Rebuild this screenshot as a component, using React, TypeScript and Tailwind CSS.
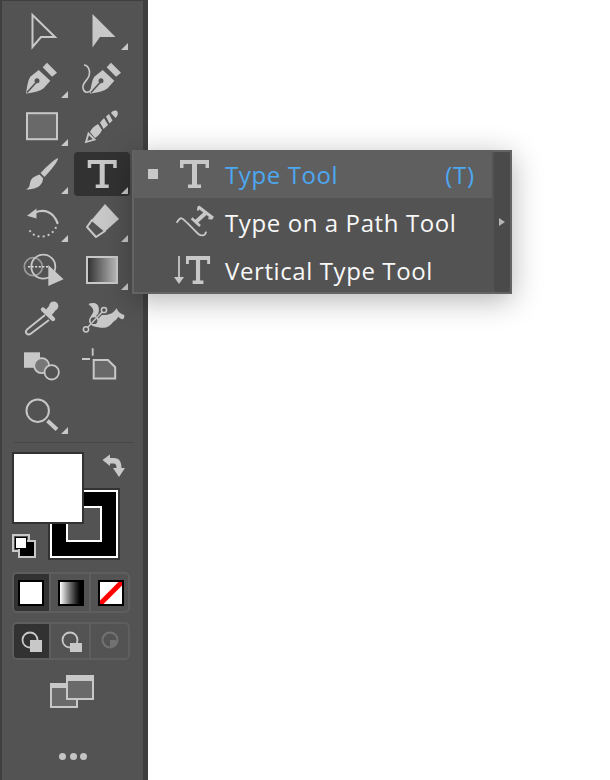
import type { ReactNode } from 'react';

const ink = '#c8c8c8';
const panel = '#535353';

// serif T used by the tool button and the flyout
function TGlyph({ x = 0, y = 0, fill = ink }: { x?: number; y?: number; fill?: string }) {
  return (
    <path
      transform={`translate(${x} ${y})`}
      fill={fill}
      d="M0 0H29V8H25.5V4H17V24.5H21V28H8V24.5H12V4H3.5V8H0Z"
    />
  );
}

function PenNib({ dx = 0 }: { dx?: number }) {
  return (
    <g transform={`translate(${dx} 0)`}>
      <path fill={ink} d="M33 6.7L43 16.7L38 20.7L28.7 11.3Z" />
      <path fill={ink} d="M12 37.5C13 31 14 24 16.3 20.7L24.7 14L36.3 24.7L29.7 32.3C26 35 19 37 12 37.5Z" />
      <path stroke={panel} strokeWidth="1.6" d="M13 36.5L22.5 26" />
      <circle cx="23" cy="24.7" r="2.5" fill={panel} />
    </g>
  );
}

const tools: { icon: ReactNode; corner?: boolean; active?: boolean }[] = [
  {
    icon: <path d="M18.5 7L41 29H27L18.5 39Z" fill="none" stroke={ink} strokeWidth="2" />,
  },
  {
    icon: <path d="M18.5 6L41.5 29H26L18.5 39.5Z" fill={ink} />,
    corner: true,
  },
  { icon: <PenNib />, corner: true },
  {
    icon: (
      <>
        <PenNib dx={4} />
        <path
          d="M10 9C14 9 17 15 15 20C13 25 8 27 9 32C10 37 15 38 17.5 33"
          fill="none"
          stroke={ink}
          strokeWidth="1.6"
        />
      </>
    ),
  },
  {
    icon: <rect x="13" y="9.2" width="30" height="26" fill="#696969" stroke={ink} strokeWidth="2" />,
    corner: true,
  },
  {
    icon: (
      <>
        <path d="M12 38L14.5 29.5L20.5 35.5Z" fill="none" stroke={ink} strokeWidth="1.8" />
        <path d="M16 28C18 24 20 22.5 24 20L28 26C26 30 24 32 21 34Z" fill={ink} />
        <path d="M26 18.5L30 14L34 21L29.5 25Z" fill={ink} />
        <path d="M32 12.5L35 10L38.5 16.5L35.5 19.5Z" fill={ink} />
        <path d="M37 9C39 6.5 41 6 43 7C44.5 9 44 11.5 41.5 14Z" fill={ink} />
      </>
    ),
  },
  {
    icon: (
      <>
        <path d="M44 6C44.5 9 37 18 30.5 25L26.5 21C33 14 41 7 44 6Z" fill={ink} />
        <path d="M25.5 22.5L29 26C29 31 26 37.5 12 37.5C17 35 15 32 17 28C18.5 25 22 24 25.5 22.5Z" fill={ink} />
      </>
    ),
    corner: true,
  },
  {
    icon: <TGlyph x={13.7} y={8} />,
    corner: true,
    active: true,
  },
  {
    icon: (
      <>
        <path d="M13 15.7L22.5 8.5V18.5Z" fill={ink} />
        <path d="M21 12.5C30 9 39 11 43.5 23" fill="none" stroke={ink} strokeWidth="2.2" />
        <path
          d="M43.5 23C41.5 31 36 36 28.5 36.5C22 37 17 34 15 29"
          fill="none"
          stroke={ink}
          strokeWidth="2.2"
          strokeDasharray="0.1 5"
          strokeLinecap="round"
        />
      </>
    ),
    corner: true,
  },
  {
    icon: (
      <>
        <path d="M31 4L45 19L31.5 31L18 19.5Z" fill={ink} />
        <path d="M18 20L31 31L22 37L13 27Z" fill="none" stroke={ink} strokeWidth="2" strokeLinejoin="round" />
      </>
    ),
    corner: true,
  },
  {
    icon: (
      <>
        <circle cx="19.3" cy="18.7" r="9" fill="none" stroke="#9a9a9a" strokeWidth="1.7" />
        <circle cx="29.3" cy="18.7" r="12" fill="none" stroke={ink} strokeWidth="1.8" />
        <path d="M14 18.7H34" stroke="#e2e2e2" strokeWidth="1.6" strokeDasharray="2 1.6" />
        <path d="M34.3 17L49.5 31.3L34.3 38Z" fill={ink} />
      </>
    ),
  },
  {
    icon: (
      <>
        <defs>
          <linearGradient id="gradTool">
            <stop offset="0" stopColor="#2f2f2f" />
            <stop offset="1" stopColor="#bdbdbd" />
          </linearGradient>
        </defs>
        <rect x="13" y="9" width="30" height="26" fill="url(#gradTool)" stroke={ink} strokeWidth="2" />
      </>
    ),
    corner: true,
  },
  {
    icon: (
      <>
        <path
          d="M31 19L13 33.5C10 37 14 40 17 37.5L35 24"
          fill="none"
          stroke={ink}
          strokeWidth="1.9"
          strokeLinejoin="round"
        />
        <path d="M29 13.5L39 23" stroke={ink} strokeWidth="4.4" strokeLinecap="round" />
        <path d="M33.5 18L38.5 12" stroke={ink} strokeWidth="8" />
        <circle cx="39.7" cy="10" r="4.6" fill={ink} />
      </>
    ),
  },
  {
    icon: (
      <>
        <path
          d="M14.3 8C17 6.5 21 6.5 22.7 8C25 10 25.6 14 24.3 17.3C27 19 29 19.3 31 19C34 18.8 36 18 37.7 17.3C39.5 16 41.5 14 42.7 12.3C43.5 14.5 45 17.5 50.3 19C50.5 21 50 23 48.7 23.3C47 23.3 45.5 22 44.3 20.7C43 23 41.5 24.5 39.3 25.7C37.5 28 35.5 30 32.7 31.3C30 32 27 32 24.3 31.3C21.5 31 19 30.5 17.7 29C16 27 15.5 24.5 16 22.3C16.5 20 18.5 18 19.3 15.7C19.5 13.5 18.5 12 17.7 11.3C16.5 10 15.5 9 14.3 8Z"
          fill={ink}
        />
        <path d="M12 33.3L30 14" stroke={panel} strokeWidth="3.4" />
        <path d="M12 33.3L30 14" stroke={ink} strokeWidth="1.4" />
        <circle cx="20" cy="24.7" r="4.2" fill={panel} stroke={ink} strokeWidth="1.6" />
        <path d="M17.5 27.3L22.5 22" stroke={ink} strokeWidth="1.4" />
        <circle cx="12" cy="33.3" r="2.6" fill={panel} stroke={ink} strokeWidth="1.5" />
        <circle cx="30" cy="14" r="2.6" fill={panel} stroke={ink} strokeWidth="1.5" />
      </>
    ),
  },
  {
    icon: (
      <>
        <rect x="10" y="8.3" width="16" height="15.5" fill={ink} />
        <circle cx="27.7" cy="21.7" r="7.5" fill="#777777" stroke={ink} strokeWidth="1.8" />
        <circle cx="37.7" cy="28.3" r="7.2" fill={panel} stroke={ink} strokeWidth="1.8" />
      </>
    ),
  },
  {
    icon: (
      <>
        <path d="M18.7 4.3V11.7M8 15H16" stroke={ink} strokeWidth="1.8" />
        <path d="M19.7 16H34L41.2 23.2V34.4H19.7Z" fill="#696969" stroke={ink} strokeWidth="2" />
      </>
    ),
  },
  {
    icon: (
      <>
        <circle cx="23.7" cy="18.7" r="11.2" fill="none" stroke={ink} strokeWidth="2" />
        <path d="M33.5 28.8L43 37.5" stroke={ink} strokeWidth="4" />
      </>
    ),
    corner: true,
  },
];

function ToolCell({ icon, corner, active }: { icon: ReactNode; corner?: boolean; active?: boolean }) {
  return (
    <div className={`h-[44px] w-[56px] rounded-[4px] ${active ? 'bg-[#323232]' : ''}`}>
      <svg width="56" height="44" viewBox="0 0 56 44" className="block">
        {icon}
        {corner && <path d="M54 35V42H47Z" fill={ink} />}
      </svg>
    </div>
  );
}

function Swatch({ children }: { children: ReactNode }) {
  return <div className="h-[26px] w-[26px] border-2 border-black bg-white">{children}</div>;
}

// the three segments of both button strips share the same uneven widths
function Segment({ pos, active, children }: { pos: 0 | 1 | 2; active?: boolean; children: ReactNode }) {
  const sizes = ['w-[37px] pl-[4px] border-r-2', 'w-[40px] pl-[7px] border-r-2', 'w-[37px] pl-[7px]'];
  return (
    <div className={`flex items-center border-[#5e5e5e] ${sizes[pos]} ${active ? 'bg-[#323232]' : ''}`}>
      {children}
    </div>
  );
}

function DrawMode({ dim, small }: { dim?: boolean; small?: boolean }) {
  const c = dim ? '#727272' : ink;
  return (
    <svg width="28" height="26" viewBox="0 0 28 26" className="block">
      <circle cx="12" cy="12" r="7.5" fill="none" stroke={c} strokeWidth={dim ? 2 : 1.8} />
      {dim ? (
        <path d="M12 12H18.5C18.5 16 16 18.5 12 18.5Z" fill={c} />
      ) : (
        <rect x="12" y={small ? 15 : 12} width="12" height={small ? 9 : 12} fill={c} />
      )}
    </svg>
  );
}

function FlyoutRow({
  icon,
  label,
  hint,
  current,
}: {
  icon: ReactNode;
  label: string;
  hint?: string;
  current?: boolean;
}) {
  return (
    <div className={`flex h-[48px] items-center ${current ? 'bg-[#5f5f5f] text-[#4da7f1]' : 'text-[#f8f8f8]'}`}>
      <span className="ml-[14px] flex w-[10px] justify-center">
        {current && <span className="h-[10px] w-[10px] bg-[#c8c8c8]" />}
      </span>
      <svg width="40" height="40" viewBox="0 0 40 40" className="ml-[16px] block shrink-0 overflow-visible">
        {icon}
      </svg>
      <span className="ml-[11px] pt-[2px] font-medium tracking-[0.6px]">{label}</span>
      {hint && <span className="ml-auto mr-[17px] pt-[2px] font-medium tracking-[0.8px]">{hint}</span>}
    </div>
  );
}

export default function App() {
  return (
    <div className="relative flex h-[780px] w-[610px] overflow-hidden bg-white font-['Open_Sans',sans-serif]">
      {/* Tools panel */}
      <aside className="h-full w-[148px] shrink-0 border-t border-l-2 border-r-[5px] border-[#3f3f3f] bg-[#535353] pl-[12px] pt-[7px]">
        <div className="grid w-[116px] grid-cols-[56px_56px] gap-x-[4px] gap-y-[4px]">
          {tools.map((tool, i) => (
            <ToolCell key={i} icon={tool.icon} corner={tool.corner} active={tool.active} />
          ))}
        </div>

        <div className="mt-[6px] h-[1px] w-[120px] bg-[#474747]" />

        {/* Fill and stroke */}
        <div className="relative -ml-[2px] mt-[9px] h-[108px] w-[118px]">
          <div className="absolute left-[36px] top-[36px] flex h-[72px] w-[72px] items-center justify-center border-2 border-[#323232] bg-black outline-2 -outline-offset-4 outline-white">
            <div className="h-[36px] w-[36px] border-2 border-white bg-[#535353]" />
          </div>
          <div className="absolute left-0 top-0 h-[72px] w-[72px] border-2 border-[#323232] bg-white" />
          <svg width="24" height="24" viewBox="0 0 24 24" className="absolute left-[89px] top-[2px]">
            <path d="M1.5 6L9 0.5V4H13C18.5 4 20.5 8 20.5 14H24L18 23L12 14H15.5C15.5 11 15 9.5 12 9.5H9V12Z" fill={ink} />
          </svg>
          <div className="absolute left-0 top-[82px] h-[18px] w-[18px] border-2 border-[#c8c8c8] bg-[#535353]" />
          <div className="absolute left-[6px] top-[88px] h-[18px] w-[18px] border-2 border-[#c8c8c8] bg-black" />
          <div className="absolute left-[3px] top-[85px] h-[12px] w-[12px] border border-black bg-white" />
        </div>

        {/* Colour modes */}
        <div className="-ml-[2px] mt-[12px] flex h-[41px] w-[118px] overflow-hidden rounded-[5px] border-2 border-[#5e5e5e]">
          <Segment pos={0} active>
            <Swatch>{null}</Swatch>
          </Segment>
          <Segment pos={1}>
            <div className="h-[26px] w-[26px] border-2 border-black bg-gradient-to-r from-white to-black" />
          </Segment>
          <Segment pos={2}>
            <Swatch>
              <svg width="22" height="22" viewBox="0 0 22 22" className="block">
                <path d="M0 22L22 0" stroke="#ff0000" strokeWidth="5" />
              </svg>
            </Swatch>
          </Segment>
        </div>

        {/* Draw modes */}
        <div className="-ml-[2px] mt-[9px] flex h-[38px] w-[118px] overflow-hidden rounded-[5px] border-2 border-[#5e5e5e]">
          <Segment pos={0} active>
            <DrawMode />
          </Segment>
          <Segment pos={1}>
            <DrawMode small />
          </Segment>
          <Segment pos={2}>
            <DrawMode dim />
          </Segment>
        </div>

        {/* Screen mode */}
        <svg width="46" height="34" viewBox="0 0 46 34" className="ml-[36px] mt-[15px] block">
          <rect x="1" y="9" width="26" height="23" fill="#6a6a6a" stroke={ink} strokeWidth="2" />
          <rect x="1" y="9" width="26" height="4" fill={ink} />
          <rect x="17" y="1" width="26" height="23" fill="#6a6a6a" stroke={ink} strokeWidth="2" />
          <rect x="17" y="1" width="26" height="5" fill={ink} />
        </svg>

        <div className="ml-[45px] mt-[44px] flex gap-[3.5px]">
          <span className="h-[7px] w-[7px] rounded-full bg-[#c4c4c4]" />
          <span className="h-[7px] w-[7px] rounded-full bg-[#c4c4c4]" />
          <span className="h-[7px] w-[7px] rounded-full bg-[#c4c4c4]" />
        </div>
      </aside>

      {/* Type tool flyout */}
      <div className="absolute left-[132px] top-[150px] flex h-[144px] w-[380px] border-2 border-[#636363] bg-[#535353] text-[24px] shadow-[0_6px_28px_rgba(0,0,0,0.3)]">
        <div className="-mt-[2px] w-[358px]">
          <FlyoutRow current label="Type Tool" hint="(T)" icon={<TGlyph x={6} y={6} />} />
          <FlyoutRow
            label="Type on a Path Tool"
            icon={
              <g fill="none" stroke={ink}>
                <path d="M2.7 20.7C4 18.5 6 16 7.7 16.3C9.5 16.5 12 20 24.3 32C27 34 31.5 34.5 32 29.7" strokeWidth="1.8" />
                <path d="M24.3 4.7L39 16" strokeWidth="3" />
                <path d="M24.8 4.2L23.8 8.5M38.5 16.5L34.3 16.3" strokeWidth="2" />
                <path d="M32 10.7L21 20.7" strokeWidth="4" />
                <path d="M17.7 16.3L26 24" strokeWidth="2.6" />
              </g>
            }
          />
          <FlyoutRow
            label="Vertical Type Tool"
            icon={
              <>
                <path d="M5 6V28" stroke={ink} strokeWidth="1.8" />
                <path d="M0 27H10L5 34Z" fill={ink} />
                <g transform="translate(12 6) scale(0.83 1)">
                  <TGlyph />
                </g>
              </>
            }
          />
        </div>
        <div className="ml-[2px] flex flex-1 items-center justify-center rounded-[3px] bg-[#4a4a4a]">
          <svg width="6" height="8" viewBox="0 0 6 8" className="block">
            <path d="M0 0L6 4L0 8Z" fill="#b5b5b5" />
          </svg>
        </div>
      </div>
    </div>
  );
}
